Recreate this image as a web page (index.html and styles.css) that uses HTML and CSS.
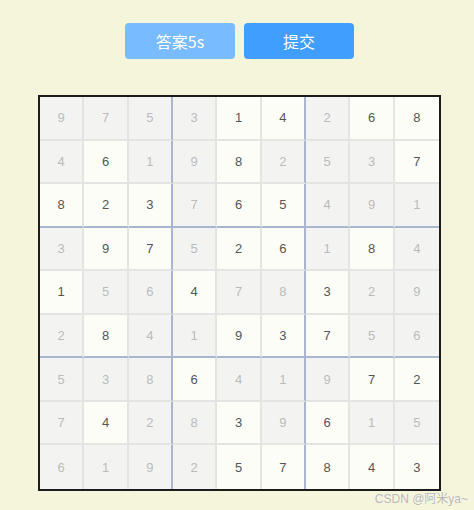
FILE: index.html
```html
<!DOCTYPE html>
<html lang="zh-CN">
<head>
  <meta charset="UTF-8">
  <meta name="viewport" content="width=device-width, initial-scale=1.0">
  <title>数独</title>
  <link rel="stylesheet" href="styles.css">
</head>

<body>

  <div class="app">
    <!-- Toolbar -->
    <div class="toolbar">
      <button class="btn btn-light">答案5s</button>
      <button class="btn">提交</button>
    </div>

    <!-- Board -->
    <div class="board" id="board"></div>
  </div>

  <div class="watermark">CSDN @阿米ya~</div>

  <script>
    // g = given (white cell), x = filled (grey cell)
    var rows = [
      '9x7x5x3x1g4g2x6g8g',
      '4x6g1x9x8g2x5x3x7g',
      '8g2g3g7x6g5g4x9x1x',
      '3x9g7g5x2g6g1x8g4x',
      '1g5x6x4g7x8x3g2x9x',
      '2x8g4x1x9g3g7g5x6x',
      '5x3x8x6g4x1x9x7g2g',
      '7x4g2x8x3g9x6g1x5x',
      '6x1x9x2x5g7g8g4g3g'
    ];

    var board = document.getElementById('board');
    rows.forEach(function (row, r) {
      for (var c = 0; c < 9; c++) {
        var cell = document.createElement('div');
        cell.className = 'cell ' + (row[c * 2 + 1] == 'g' ? 'given' : 'empty');
        if (c == 2 || c == 5) cell.className += ' edge-right';
        if (r == 2 || r == 5) cell.className += ' edge-bottom';
        if (c == 8) cell.className += ' last-col';
        if (r == 8) cell.className += ' last-row';
        cell.textContent = row[c * 2];
        board.appendChild(cell);
      }
    });
  </script>
</body>
</html>
```

FILE: styles.css
```css
/* General styles */
body {
  margin: 0;
  padding: 0;
  background-color: #f5f5dc;
  font-family: "Liberation Sans", Arial, "Noto Sans CJK SC", sans-serif;
}

.app {
  display: flex;
  flex-direction: column;
  align-items: center;
  padding: 23px 0 0 5px;
}

/* Buttons */
.toolbar {
  display: flex;
  gap: 9px;
  margin-bottom: 36px;
}

.btn {
  width: 110px;
  height: 36px;
  border: none;
  border-radius: 4px;
  background-color: #409eff;
  color: white;
  font-size: 16px;
  font-family: "Noto Sans CJK SC", sans-serif;
  cursor: pointer;
}

.btn-light {
  background-color: #79bbff;
}

/* Sudoku board */
.board {
  width: 399px;
  height: 392px;
  border: 2px solid #1c1c1c;
  background-color: #f3f4f1;
  display: grid;
  grid-template-columns: repeat(9, 1fr);
  grid-template-rows: repeat(9, 1fr);
}

.cell {
  box-sizing: border-box;
  display: flex;
  align-items: center;
  justify-content: center;
  font-family: "Liberation Sans", Arial, sans-serif;
  font-size: 13px;
  border-right: 2px solid #e4e5e2;
  border-bottom: 2px solid #e4e5e2;
}

.cell.given {
  background-color: #fdfdf8;
  color: #555;
}

.cell.empty {
  background-color: #f3f4f2;
  color: #bbb;
}

.cell.edge-right {
  border-right: 2px solid #aab6d0;
}

.cell.edge-bottom {
  border-bottom: 2px solid #aab6d0;
}

.cell.last-col {
  border-right: none;
}

.cell.last-row {
  border-bottom: none;
}

.watermark {
  position: absolute;
  top: 489px;
  right: 6px;
  font-size: 12px;
  color: #b8b8b8;
  text-shadow: 0 0 1px #fff;
}
```
